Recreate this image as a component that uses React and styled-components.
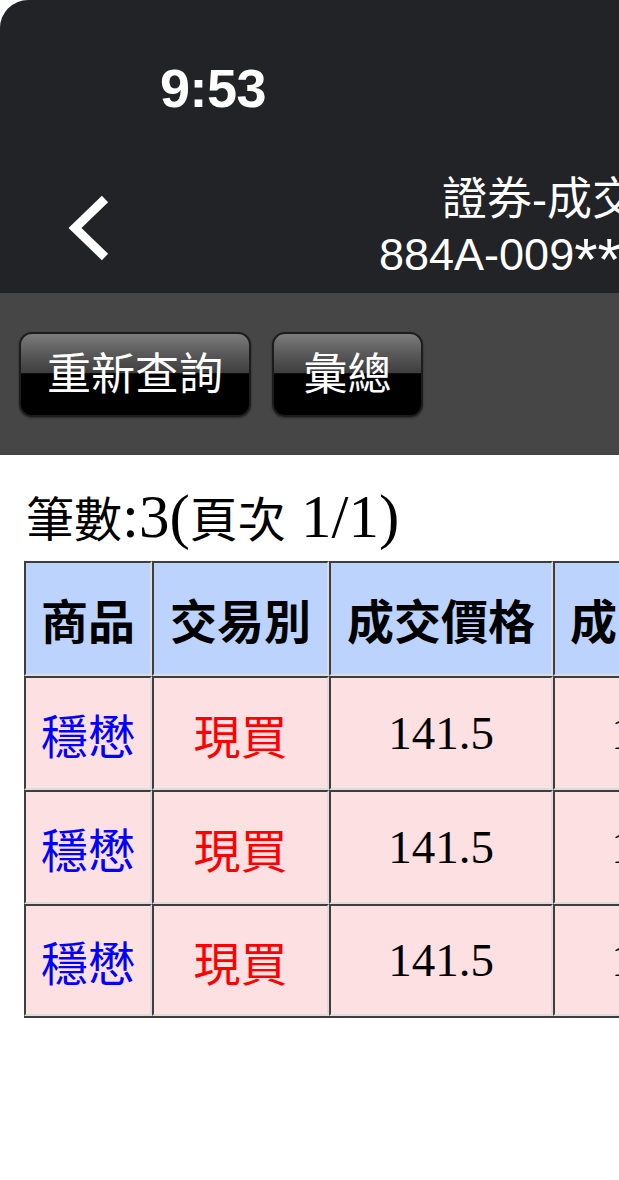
import React from 'react';
import styled, { createGlobalStyle } from 'styled-components';

const GlobalStyle = createGlobalStyle`
  html, body {
    margin: 0;
    padding: 0;
    background: #ffffff;
  }
  body {
    width: 619px;
    overflow: hidden;
    font-family: "Liberation Serif", "Noto Sans CJK TC", serif;
  }
`;

const Page = styled.div`
  width: 619px;
  min-height: 1180px;
  overflow: hidden;
  background: #ffffff;
`;

const Header = styled.div`
  height: 293px;
  background: #222326;
  border-top-left-radius: 28px;
  color: #ffffff;
  font-family: "Liberation Sans", "Noto Sans CJK TC", sans-serif;
`;

const StatusBar = styled.div`
  height: 150px;
  box-sizing: border-box;
  padding: 61px 0 0 160px;
`;

const Time = styled.div`
  font-size: 54px;
  line-height: 54px;
  font-weight: 700;
  letter-spacing: -0.5px;
`;

const NavBar = styled.div`
  display: flex;
  align-items: flex-start;
  height: 143px;
`;

const BackButton = styled.div`
  width: 58px;
  margin: 44px 0 0 66px;
  flex-shrink: 0;
`;

const TitleBlock = styled.div`
  margin-left: 255px;
  margin-top: 22px;
  white-space: nowrap;
`;

const TitleLine = styled.div`
  font-size: 45px;
  line-height: 55px;
  padding-left: ${p => p.$indent || 0}px;
`;

const Star = styled.span`
  font-size: 60px;
  vertical-align: -10px;
  line-height: 0;
`;

const Toolbar = styled.div`
  height: 162px;
  box-sizing: border-box;
  background: #464646;
  display: flex;
  align-items: flex-start;
  gap: 21px;
  padding: 39px 0 0 19px;
`;

const GlossButton = styled.button`
  height: 85px;
  min-width: 151px;
  box-sizing: border-box;
  padding: 0 26px 8px;
  border: 2px solid #1c1c1c;
  border-radius: 13px;
  background: linear-gradient(
    to bottom,
    #7c7c7c 0%,
    #5a5a5a 24%,
    #3e3e3e 48%,
    #000000 49%,
    #000000 100%
  );
  box-shadow: 0 1px 2px rgba(0, 0, 0, 0.45);
  color: #ffffff;
  font-family: "Noto Sans CJK TC", sans-serif;
  font-size: 44px;
  line-height: 1;
  cursor: pointer;
`;

const Content = styled.div`
  padding: 30px 0 0 24px;
`;

const Count = styled.div`
  font-size: 48px;
  line-height: 64px;
  margin-bottom: 8px;
  margin-left: 2px;
  white-space: nowrap;
`;

const Latin = styled.span`
  font-size: 61px;
`;

const Table = styled.table`
  border-collapse: separate;
  border-spacing: 0;
  table-layout: fixed;
  width: 751px;
  border-bottom: 2px solid #3e3e3e;
`;

const Col = styled.col`
  width: ${p => p.$w}px;
`;

const HeadCell = styled.th`
  height: 111px;
  padding: 0;
  background: #bbd3fd;
  border-top: 2px solid #3e3e3e;
  border-left: 2px solid #3e3e3e;
  border-right: 2px solid #dcdcdc;
  border-bottom: 2px solid #dcdcdc;
  font-family: "Noto Sans CJK TC", sans-serif;
  font-size: 47px;
  font-weight: 700;
  color: #000000;
  text-align: center;
  white-space: nowrap;
  overflow: hidden;
`;

const Cell = styled.td`
  height: ${p => p.$h || 110}px;
  padding: 0;
  background: #fde0e1;
  border-top: 2px solid #3e3e3e;
  border-left: 2px solid #3e3e3e;
  border-right: 2px solid #dcdcdc;
  border-bottom: 2px solid #dcdcdc;
  font-size: 47px;
  color: ${p => p.$color || '#000000'};
  text-align: center;
  white-space: nowrap;
  overflow: hidden;
`;

const rows = [
  { name: '穩懋', side: '現買', price: '141.5', qty: '1,000' },
  { name: '穩懋', side: '現買', price: '141.5', qty: '1,000' },
  { name: '穩懋', side: '現買', price: '141.5', qty: '1,000' },
];

const App = () => {
  return (
    <Page>
      <GlobalStyle />
      <Header>
        <StatusBar>
          <Time>9:53</Time>
        </StatusBar>
        <NavBar>
          <BackButton>
            <svg width="50" height="70" viewBox="0 0 50 70">
              <polyline
                points="39,5 9,34 39,63"
                fill="none"
                stroke="#ffffff"
                strokeWidth="9"
                strokeLinecap="butt"
                strokeLinejoin="miter"
              />
            </svg>
          </BackButton>
          <TitleBlock>
            <TitleLine $indent={63}>證券-成交查詢</TitleLine>
            <TitleLine>884A-009<Star>**</Star>****</TitleLine>
          </TitleBlock>
        </NavBar>
      </Header>
      <Toolbar>
        <GlossButton>重新查詢</GlossButton>
        <GlossButton>彙總</GlossButton>
      </Toolbar>
      <Content>
        <Count>
          筆數<Latin>:3(</Latin>頁次<Latin> 1/1)</Latin>
        </Count>
        <Table>
          <colgroup>
            <Col $w={128} />
            <Col $w={177} />
            <Col $w={224} />
            <Col $w={222} />
          </colgroup>
          <thead>
            <tr>
              <HeadCell>商品</HeadCell>
              <HeadCell>交易別</HeadCell>
              <HeadCell>成交價格</HeadCell>
              <HeadCell>成交股數</HeadCell>
            </tr>
          </thead>
          <tbody>
            {rows.map((r, i) => {
              const h = i === rows.length - 1 ? 108 : 110;
              return (
                <tr key={i}>
                  <Cell $h={h} $color="#0000ff">{r.name}</Cell>
                  <Cell $h={h} $color="#ff0000">{r.side}</Cell>
                  <Cell $h={h}>{r.price}</Cell>
                  <Cell $h={h}>{r.qty}</Cell>
                </tr>
              );
            })}
          </tbody>
        </Table>
      </Content>
    </Page>
  );
};

export default App;
